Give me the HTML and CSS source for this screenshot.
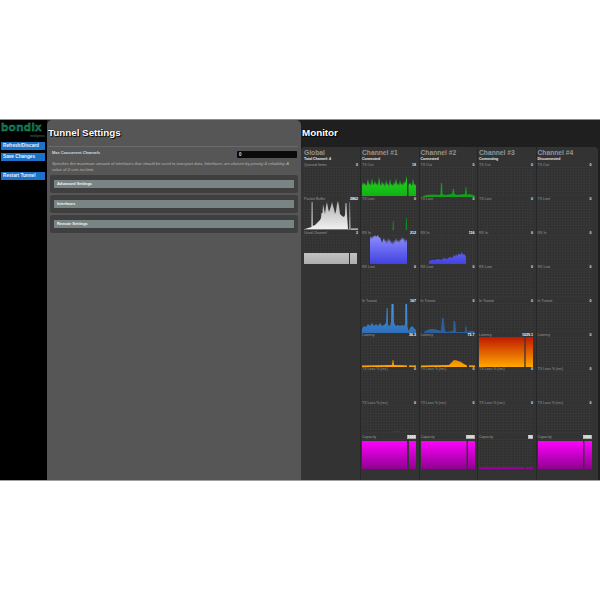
FILE: index.html
```html
<!DOCTYPE html>
<html lang="en">
<head>
<meta charset="utf-8">
<title>Bondix Tunnel Settings</title>
<link rel="stylesheet" href="styles.css">
</head>
<body>
<svg class="defs" aria-hidden="true">
  <defs>
    <linearGradient id="g-green" gradientUnits="userSpaceOnUse" x1="0" y1="0" x2="0" y2="30"><stop offset="0.3" stop-color="#24d824"/><stop offset="1" stop-color="#10b010"/></linearGradient>
    <linearGradient id="g-white" gradientUnits="userSpaceOnUse" x1="0" y1="0" x2="0" y2="30"><stop offset="0" stop-color="#b0b0b0"/><stop offset="1" stop-color="#f4f4f4"/></linearGradient>
    <linearGradient id="g-gray" gradientUnits="userSpaceOnUse" x1="0" y1="17" x2="0" y2="30"><stop offset="0" stop-color="#c4c4c4"/><stop offset="1" stop-color="#acacac"/></linearGradient>
    <linearGradient id="g-violet" gradientUnits="userSpaceOnUse" x1="0" y1="0" x2="0" y2="30"><stop offset="0" stop-color="#8e8eff"/><stop offset="1" stop-color="#3f3fe0"/></linearGradient>
    <linearGradient id="g-blue" gradientUnits="userSpaceOnUse" x1="0" y1="0" x2="0" y2="30"><stop offset="0" stop-color="#4a9ae6"/><stop offset="1" stop-color="#2f6fb8"/></linearGradient>
    <linearGradient id="g-orange" gradientUnits="userSpaceOnUse" x1="0" y1="0" x2="0" y2="30"><stop offset="0" stop-color="#c01800"/><stop offset="1" stop-color="#ffa800"/></linearGradient>
    <linearGradient id="g-magenta" gradientUnits="userSpaceOnUse" x1="0" y1="2" x2="0" y2="30"><stop offset="0" stop-color="#ff00ff"/><stop offset="1" stop-color="#900090"/></linearGradient>
  </defs>
</svg>
<div class="app">
  <nav class="sidebar">
    <div class="logo"><span class="logo-word">bondix</span><small>intelligence</small></div>
    <button class="btn">Refresh/Discard</button>
    <button class="btn">Save Changes</button>
    <button class="btn btn-gap">Restart Tunnel</button>
  </nav>

  <section class="settings">
    <h1 class="title">Tunnel Settings</h1>
    <div class="field">
      <div class="field-row">
        <label class="field-label">Max Concurrent Channels</label>
        <div class="input">0</div>
      </div>
      <p class="hint">Specifies the maximum amount of interfaces that should be used to transport data. Interfaces are chosen by priority &amp; reliability. A value of 0 sets no limit.</p>
    </div>
    <div class="group"><div class="group-bar">Advanced Settings</div></div>
    <div class="group"><div class="group-bar">Interfaces</div></div>
    <div class="group"><div class="group-bar">Remote Settings</div></div>
  </section>

  <section class="monitor">
    <h1 class="title mon-title">Monitor</h1>
    <div class="board">
      <div class="col col-global">
        <h2>Global</h2>
        <div class="status">Total Channel: 4</div>
        <div class="row"><span>Queued Items</span><b>0</b></div>
        <svg class="plot" viewBox="0 0 54 30"></svg>
        <div class="row"><span>Packet Buffer</span><b class="hi">2862</b></div>
        <svg class="plot" viewBox="0 0 54 30"><polygon fill="url(#g-white)" points="1,28 4,27 7.5,26 7.6,1 8.6,1 8.7,25 11,24 14,21 16,19 17,17 17.5,12 18.5,12 19,3 20,8 21,13 22,5 23,1 24,7 25,11 27,5 28,1 29,5 30,8 31,13 32,10 33,3 34,0 35,5 36,13 38,15 40,16 41,14 41.5,2 42.5,2 43,14 44,28"/><polygon fill="url(#g-white)" points="46,1 45.6,1 45.4,28 46.4,28"/><rect x="0" y="28" width="54" height="0.7" fill="#9a9a9a"/><rect x="47" y="27.5" width="7" height="1" fill="#ddd"/></svg>
        <div class="row"><span>Used Channel</span><b>2</b></div>
        <svg class="plot" viewBox="0 0 54 30"><rect x="0" y="18" width="45" height="11" fill="url(#g-gray)"/><rect x="46" y="18" width="7" height="11" fill="url(#g-gray)"/></svg>
      </div>

      <div class="col">
        <h2>Channel #1</h2>
        <div class="status">Connected</div>
        <div class="row"><span>TX Out</span><b>18</b></div>
        <svg class="plot" viewBox="0 0 54 30"><polygon fill="url(#g-green)" points="0,29 0,19 1,15 2,18 3,16 4,19 5,17 6,12 7,18 8,16 9,19 10,11 11,18 12,17 13,14 14,18 15,16 16,19 17,10 18,17 19,19 20,14 21,18 22,16 23,20 24,13 25,18 26,16 27,20 28,12 29,18 30,17 31,19 32,15 33,18 34,11 35,18 36,16 37,19 38,13 39,18 40,16 41,19 42,14 43,17 44,13 45,9 45,29"/><polygon fill="url(#g-green)" points="46.5,29 46.5,18 48,16 50,19 51,12 52,18 53,17 54,19 54,29"/></svg>
        <div class="row"><span>TX Lost</span><b>0</b></div>
        <svg class="plot" viewBox="0 0 54 30"><polygon fill="#0f8a1a" points="30.5,29 30.8,20 31.6,20 32,29"/><polygon fill="#0f8a1a" points="43.6,29 44,17 44.8,17 45.2,29"/></svg>
        <div class="row"><span>RX In</span><b class="hi">212</b></div>
        <svg class="plot" viewBox="0 0 54 30"><polygon fill="url(#g-violet)" points="8,29 8,4 9,1 10,4 11,1 12,2 13,0 14,2 15,1 16,0 17,3 18,2 19,5 20,8 21,5 22,3 23,7 24,5 25,9 26,3 27,7 28,4 29,9 30,6 31,10 32,5 33,8 34,3 35,7 36,5 37,8 38,4 39,6 40,2 41,5 42,3 43,8 44,4 45,7 45,29"/></svg>
        <div class="row"><span>RX Lost</span><b>0</b></div>
        <svg class="plot" viewBox="0 0 54 30"></svg>
        <div class="row"><span>In Transit</span><b class="hi">167</b></div>
        <svg class="plot" viewBox="0 0 54 30"><polygon fill="url(#g-blue)" points="0,30 0,26 2,23 4,24 6,21 8,23 10,20 12,23 14,21 16,23 18,20 20,23 22,22 24,20 24.8,5 25.6,5 26,22 28,23 29,19 29.5,1 31.5,1 32,20 34,23 36,22 38,23 40,22 42,23 43,21 43.5,1 45,1 45.5,24 46.5,28 48,25 50,23 52,25 54,27 54,30"/></svg>
        <div class="row"><span>Latency</span><b class="hi">36.3</b></div>
        <svg class="plot" viewBox="0 0 54 30"><polygon fill="url(#g-orange)" points="0,30 0,28.4 30,28 30.6,23 31.4,23 32,28 42,28.2 45,28.4 45,30"/><rect x="47" y="28.4" width="7" height="1.6" fill="#f0a010"/></svg>
        <div class="row"><span>TX Loss % (rec)</span><b>0</b></div>
        <svg class="plot" viewBox="0 0 54 30"></svg>
        <div class="row"><span>TX Loss % (rec)</span><b>0</b></div>
        <svg class="plot" viewBox="0 0 54 30"><rect x="31" y="26" width="7" height="1" fill="#a81010"/><rect x="44" y="26" width="1.4" height="1" fill="#a81010"/></svg>
        <div class="row"><span>Capacity</span><b class="hi box">1000</b></div>
        <svg class="plot" viewBox="0 0 54 30"><rect x="0" y="2" width="45" height="28" fill="url(#g-magenta)"/><rect x="47" y="2" width="7" height="28" fill="url(#g-magenta)"/></svg>
      </div>

      <div class="col">
        <h2>Channel #2</h2>
        <div class="status">Connected</div>
        <div class="row"><span>TX Out</span><b>0</b></div>
        <svg class="plot" viewBox="0 0 54 30"><polygon fill="#12a01c" points="2,29 6,28 12,27.5 18,28 19.5,27 20,16 21,16 21.5,27 24,28 31,27 32,22 33,22 33.5,27 36,28 44,27 44.7,20 45.4,20 46,28 48,27 52,28 54,29 54,30 2,30"/></svg>
        <div class="row"><span>TX Lost</span><b>0</b></div>
        <svg class="plot" viewBox="0 0 54 30"></svg>
        <div class="row"><span>RX In</span><b class="hi">116</b></div>
        <svg class="plot" viewBox="0 0 54 30"><polygon fill="url(#g-violet)" points="8,29 8,26 11,25 14,25 17,24 20,25 23,23 26,24 29,22 31,23 33,20 34,22 35,19 36,21 37,20 38,18 39,20 40,19 41,17 42,20 43,19 44,20 45,22 45,29"/></svg>
        <div class="row"><span>RX Lost</span><b>0</b></div>
        <svg class="plot" viewBox="0 0 54 30"></svg>
        <div class="row"><span>In Transit</span><b>0</b></div>
        <svg class="plot" viewBox="0 0 54 30"><polygon fill="#2c5f9e" points="3,29 6,27 9,26 13,26 17,27 20,28 21,15 22.5,15 24,28 26,29 32,28 32.6,18 34.2,18 35,29 44,29 44.6,23 45.4,23 46,29 49,28 52,28 54,29 54,30 3,30"/></svg>
        <div class="row"><span>Latency</span><b class="hi">75.7</b></div>
        <svg class="plot" viewBox="0 0 54 30"><polygon fill="url(#g-orange)" points="0,30 0,28.4 28,28 30,26 33,23 36,23.5 40,25 43,27 46,28.4 46,30"/><rect x="48" y="28.4" width="6" height="1.6" fill="#f0a010"/></svg>
        <div class="row"><span>TX Loss % (rec)</span><b>0</b></div>
        <svg class="plot" viewBox="0 0 54 30"></svg>
        <div class="row"><span>TX Loss % (rec)</span><b>0</b></div>
        <svg class="plot" viewBox="0 0 54 30"></svg>
        <div class="row"><span>Capacity</span><b class="hi box">1000</b></div>
        <svg class="plot" viewBox="0 0 54 30"><rect x="0" y="2" width="45.5" height="28" fill="url(#g-magenta)"/><rect x="47" y="2" width="7" height="28" fill="url(#g-magenta)"/></svg>
      </div>

      <div class="col">
        <h2>Channel #3</h2>
        <div class="status">Connecting</div>
        <div class="row"><span>TX Out</span><b>0</b></div>
        <svg class="plot" viewBox="0 0 54 30"></svg>
        <div class="row"><span>TX Lost</span><b>0</b></div>
        <svg class="plot" viewBox="0 0 54 30"></svg>
        <div class="row"><span>RX In</span><b>0</b></div>
        <svg class="plot" viewBox="0 0 54 30"></svg>
        <div class="row"><span>RX Lost</span><b>0</b></div>
        <svg class="plot" viewBox="0 0 54 30"></svg>
        <div class="row"><span>In Transit</span><b>0</b></div>
        <svg class="plot" viewBox="0 0 54 30"></svg>
        <div class="row"><span>Latency</span><b class="hi">1029.1</b></div>
        <svg class="plot" viewBox="0 0 54 30"><rect x="0" y="0" width="45" height="30" fill="url(#g-orange)"/><rect x="45" y="0" width="2" height="30" fill="url(#g-orange)" opacity="0.35"/><rect x="47" y="0" width="7" height="30" fill="url(#g-orange)"/></svg>
        <div class="row"><span>TX Loss % (rec)</span><b>0</b></div>
        <svg class="plot" viewBox="0 0 54 30"></svg>
        <div class="row"><span>TX Loss % (rec)</span><b>0</b></div>
        <svg class="plot" viewBox="0 0 54 30"></svg>
        <div class="row"><span>Capacity</span><b class="hi box">50</b></div>
        <svg class="plot" viewBox="0 0 54 30"><rect x="0" y="28.4" width="45" height="1.6" fill="#a000a0"/><rect x="47" y="28.4" width="7" height="1.6" fill="#a000a0"/></svg>
      </div>

      <div class="col">
        <h2>Channel #4</h2>
        <div class="status">Disconnected</div>
        <div class="row"><span>TX Out</span><b>0</b></div>
        <svg class="plot" viewBox="0 0 54 30"></svg>
        <div class="row"><span>TX Lost</span><b>0</b></div>
        <svg class="plot" viewBox="0 0 54 30"></svg>
        <div class="row"><span>RX In</span><b>0</b></div>
        <svg class="plot" viewBox="0 0 54 30"></svg>
        <div class="row"><span>RX Lost</span><b>0</b></div>
        <svg class="plot" viewBox="0 0 54 30"></svg>
        <div class="row"><span>In Transit</span><b>0</b></div>
        <svg class="plot" viewBox="0 0 54 30"></svg>
        <div class="row"><span>Latency</span><b>0</b></div>
        <svg class="plot" viewBox="0 0 54 30"></svg>
        <div class="row"><span>TX Loss % (rec)</span><b>0</b></div>
        <svg class="plot" viewBox="0 0 54 30"></svg>
        <div class="row"><span>TX Loss % (rec)</span><b>0</b></div>
        <svg class="plot" viewBox="0 0 54 30"></svg>
        <div class="row"><span>Capacity</span><b class="hi box">1000</b></div>
        <svg class="plot" viewBox="0 0 54 30"><rect x="0" y="2" width="45" height="28" fill="url(#g-magenta)"/><rect x="46.5" y="2" width="7.5" height="28" fill="url(#g-magenta)"/></svg>
      </div>
    </div>
  </section>
</div>
</body>
</html>
```
FILE: styles.css
```css
html, body { margin: 0; padding: 0; background: #fff; }
body { font-family: "Liberation Sans", Arial, sans-serif; height: 600px; overflow: hidden; }
.defs { display: block; width: 0; height: 0; }
.app { display: flex; box-sizing: border-box; height: 362px; margin-top: 119px; overflow: hidden; background: #1f1f1f; border-top: 1px solid #8c8c8c; border-bottom: 1px solid #a0a0a0; }

.sidebar { width: 47px; flex: none; background: #000; display: flex; flex-direction: column; align-items: flex-start; padding: 1px 0 0 1px; box-sizing: border-box; }
.logo { height: 21px; width: 44px; }
.logo-word { display: block; height: 13px; color: #0f5c44; font: 700 11.8px/13px "Liberation Sans", sans-serif; letter-spacing: 0.4px; -webkit-text-stroke: 0.4px #22a578; }
.logo small { display: block; margin-top: 1px; color: #3a8a6a; font-size: 3px; line-height: 3px; text-align: right; }
.btn { width: 44px; height: 8px; margin: 0 0 3px; padding: 0 0 0 2px; border: 0; background: #1c72c8; color: #e8f2fc; font: 700 4.7px/8px "Liberation Sans", sans-serif; text-align: left; }
.btn-gap { margin-top: 8px; }

.settings { width: 254px; flex: none; box-sizing: border-box; background: #565656; border-radius: 5px 5px 0 0; padding: 0 3px; }
.title { margin: 0; height: 26px; font: 700 9.8px/26px "Liberation Sans", sans-serif; color: #fff; text-shadow: 1px 1px 1px #000, 0 0 1px #000; }
.settings > .title { border-bottom: 1px solid #6a6a6a; margin: 0 0 0 -2px; }
.field { padding: 2px 1px 0 2px; }
.field-row { display: flex; justify-content: space-between; align-items: flex-start; height: 11px; }
.field-label { font: 700 3.9px/8px "Liberation Sans", sans-serif; color: #d8d8d8; }
.input { width: 60px; height: 7px; margin-top: 2px; box-sizing: border-box; background: #0a0a0a; color: #ddd; border-radius: 1px; font: 700 4.5px/7px "Liberation Sans", sans-serif; padding-left: 2px; }
.hint { margin: 1px 0 0; font: italic 4.15px/6px "Liberation Sans", sans-serif; color: #b8b8b8; height: 14px; }
.group { background: #3f3f3f; border-radius: 2px; height: 18px; margin-bottom: 2px; padding: 5px 4px 0; box-sizing: border-box; width: 248px; }
.group-bar { height: 8px; background: #798484; color: #f2f2f2; font: 700 3.9px/8px "Liberation Sans", sans-serif; padding-left: 3px; }

.monitor { flex: 1; min-width: 0; }
.mon-title { padding-left: 1px; height: 27px; }
.board { display: grid; grid-template-columns: 59px repeat(4, 58.5px); width: 297px; height: 340px; background: #333; border-radius: 4px 4px 0 0; }
.col { box-sizing: border-box; padding: 2px 2.5px 0 1px; border-left: 1px solid #272727; }
.col-global { padding: 2px 2px 0 3px; border-left: 0; }
.col h2 { margin: 0; font: 700 6.7px/8px "Liberation Sans", sans-serif; color: #959595; }
.status { height: 6px; font: 700 3.5px/5px "Liberation Sans", sans-serif; color: #eee; }
.row { display: flex; justify-content: space-between; align-items: center; height: 4px; font: 3.6px/4px "Liberation Sans", sans-serif; color: #9c9c9c; }
.row b { color: #e4e4e4; font-weight: 700; }
.row b.hi { color: #fff; }
.row b.box { background: #a8a8a8; color: #fff; padding: 0 0.5px; }
.plot {
  display: block; width: 54px; height: 30px;
  background-color: #2f2f2f;
  background-image:
    linear-gradient(#383838 0.6px, transparent 0.6px),
    linear-gradient(90deg, #383838 0.6px, transparent 0.6px);
  background-size: 2.7px 2.7px;
}
```
